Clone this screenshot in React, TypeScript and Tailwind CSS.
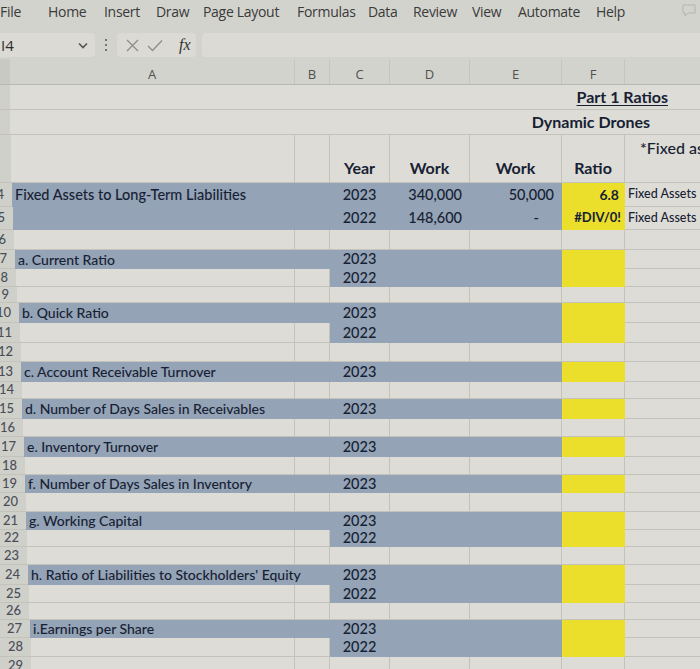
import React from "react";

type Fill = "none" | "blue" | "yellow";

const fillCls: Record<Fill, string> = {
  none: "bg-[#dddcd6] border-[#c3c2bb]",
  blue: "bg-[#94a3b5] border-[#94a3b5]",
  yellow: "bg-[#ebdf2b] border-[#ebdf2b]",
};

function Cell({
  w,
  fill = "none",
  className = "",
  children,
}: {
  w: string;
  fill?: Fill;
  className?: string;
  children?: React.ReactNode;
}) {
  return (
    <div
      className={`${w} ${fillCls[fill]} shrink-0 border-r border-b flex items-center whitespace-nowrap ${className}`}
    >
      {children}
    </div>
  );
}

type Row = {
  n: number;
  h: string;
  hw: string;
  label?: string;
  aBlue?: boolean;
  cBlue?: boolean;
  year?: string;
  yellow?: boolean;
};

const rows: Row[] = [
  { n: 6, h: "h-[20px]", hw: "w-[14px]" },
  { n: 7, h: "h-[19px]", hw: "w-[15px]", label: "a. Current Ratio", aBlue: true, cBlue: true, year: "2023", yellow: true },
  { n: 8, h: "h-[18px]", hw: "w-[16px]", cBlue: true, year: "2022", yellow: true },
  { n: 9, h: "h-[16px]", hw: "w-[17px]" },
  { n: 10, h: "h-[20px]", hw: "w-[19px]", label: "b. Quick Ratio", aBlue: true, cBlue: true, year: "2023", yellow: true },
  { n: 11, h: "h-[20px]", hw: "w-[20px]", cBlue: true, year: "2022", yellow: true },
  { n: 12, h: "h-[19px]", hw: "w-[21px]" },
  { n: 13, h: "h-[20px]", hw: "w-[21px]", label: "c. Account Receivable Turnover", aBlue: true, cBlue: true, year: "2023", yellow: true },
  { n: 14, h: "h-[17px]", hw: "w-[22px]" },
  { n: 15, h: "h-[20px]", hw: "w-[22px]", label: "d. Number of Days Sales in Receivables", aBlue: true, cBlue: true, year: "2023", yellow: true },
  { n: 16, h: "h-[18px]", hw: "w-[23px]" },
  { n: 17, h: "h-[20px]", hw: "w-[24px]", label: "e. Inventory Turnover", aBlue: true, cBlue: true, year: "2023", yellow: true },
  { n: 18, h: "h-[18px]", hw: "w-[25px]" },
  { n: 19, h: "h-[18px]", hw: "w-[25px]", label: "f. Number of Days Sales in Inventory", aBlue: true, cBlue: true, year: "2023", yellow: true },
  { n: 20, h: "h-[19px]", hw: "w-[26px]" },
  { n: 21, h: "h-[18px]", hw: "w-[26px]", label: "g. Working Capital", aBlue: true, cBlue: true, year: "2023", yellow: true },
  { n: 22, h: "h-[17px]", hw: "w-[27px]", cBlue: true, year: "2022", yellow: true },
  { n: 23, h: "h-[18px]", hw: "w-[27px]" },
  { n: 24, h: "h-[20px]", hw: "w-[28px]", label: "h. Ratio of Liabilities to Stockholders' Equity", aBlue: true, cBlue: true, year: "2023", yellow: true },
  { n: 25, h: "h-[18px]", hw: "w-[29px]", cBlue: true, year: "2022", yellow: true },
  { n: 26, h: "h-[17px]", hw: "w-[29px]" },
  { n: 27, h: "h-[18px]", hw: "w-[30px]", label: "i.Earnings per Share", aBlue: true, cBlue: true, year: "2023", yellow: true },
  { n: 28, h: "h-[19px]", hw: "w-[31px]", cBlue: true, year: "2022", yellow: true },
  { n: 29, h: "h-[19px]", hw: "w-[31px]" },
];

const font = "font-['Lato','Liberation_Sans',sans-serif]";

function RowHead({ w, n }: { w: string; n: number | string }) {
  return (
    <div
      className={`${w} shrink-0 h-full bg-[#d0d0cb] border-b border-[#c3c2bb] flex items-center justify-end pr-[8px] overflow-hidden text-[13px] text-[#4a4f57]`}
    >
      {n}
    </div>
  );
}

function Menu() {
  const items: [string, string][] = [
    ["File", "w-[48px]"],
    ["Home", "w-[56px]"],
    ["Insert", "w-[52px]"],
    ["Draw", "w-[47px]"],
    ["Page Layout", "w-[94px]"],
    ["Formulas", "w-[71px]"],
    ["Data", "w-[45px]"],
    ["Review", "w-[59px]"],
    ["View", "w-[46px]"],
    ["Automate", "w-[78px]"],
    ["Help", "w-[60px]"],
  ];
  return (
    <div className="h-[22px] flex items-center text-[14px] text-[#3a3a3a] font-['Open_Sans',sans-serif] tracking-[-0.3px]">
      {items.map(([t, w]) => (
        <div key={t} className={`${w} shrink-0`}>
          {t}
        </div>
      ))}
      <div className="ml-auto mr-[4px] mt-[-2px]">
        <svg width="14" height="13" viewBox="0 0 14 13" fill="none" stroke="#b5b5b0" strokeWidth="1">
          <path d="M1 1h12v8H6l-3 3V9H1z" />
        </svg>
      </div>
    </div>
  );
}

function FormulaBar() {
  return (
    <div className="h-[37px] pt-[11px] pb-[2px] flex items-stretch">
      <div className="w-[95px] h-[24px] shrink-0 bg-[#dbdad5] rounded-r-[4px] flex items-center justify-between pr-[7px] text-[15px] text-[#2e2e2e] font-['Open_Sans',sans-serif]">
        <span className="ml-[1px]">I4</span>
        <svg width="10" height="7" viewBox="0 0 10 7" fill="none" stroke="#555" strokeWidth="1.6">
          <path d="M1 1.5l4 4 4-4" />
        </svg>
      </div>
      <div className="w-[22px] h-[24px] shrink-0 flex flex-col items-center justify-center gap-[3px]">
        <div className="w-[2px] h-[2px] bg-[#555] rounded-full" />
        <div className="w-[2px] h-[2px] bg-[#555] rounded-full" />
        <div className="w-[2px] h-[2px] bg-[#555] rounded-full" />
      </div>
      <div className="w-[79px] h-[24px] shrink-0 bg-[#dbdad5] rounded-[4px] flex items-center pl-[8px] gap-[7px]">
        <svg width="15" height="15" viewBox="0 0 15 15" fill="none" stroke="#8d8d8a" strokeWidth="1.3">
          <path d="M2 2l11 11M13 2L2 13" />
        </svg>
        <svg width="16" height="13" viewBox="0 0 16 13" fill="none" stroke="#8d8d8a" strokeWidth="1.3">
          <path d="M1 7l4.5 4.5L15 1.5" />
        </svg>
        <span className="ml-[9px] text-[16px] italic text-[#333] font-['Liberation_Serif',serif]">fx</span>
      </div>
      <div className="ml-[6px] flex-1 h-[24px] bg-[#dbdad5] rounded-l-[4px]" />
    </div>
  );
}

function ColHeaders() {
  const cols: [string, string][] = [
    ["A", "w-[285px]"],
    ["B", "w-[35px]"],
    ["C", "w-[60px]"],
    ["D", "w-[80px]"],
    ["E", "w-[92px]"],
    ["F", "w-[63px]"],
  ];
  return (
    <div className="h-[26px] flex border-b border-[#b8b8b2] text-[13px] text-[#505050] font-['Open_Sans',sans-serif]">
      <div className="w-[10px] shrink-0 bg-[#c9c9c4]" />
      {cols.map(([c, w]) => (
        <div key={c} className={`${w} shrink-0 flex items-center justify-center border-r border-[#c6c6c0] pt-[6px]`}>
          {c}
        </div>
      ))}
      <div className="flex-1" />
    </div>
  );
}

export default function App() {
  return (
    <div className={`w-[700px] h-[669px] overflow-hidden bg-[#d3d3ce] ${font}`}>
      <Menu />
      <FormulaBar />
      <ColHeaders />

      <div className="text-[#172134] font-medium">
        {/* Row 1 */}
        <div className="h-[25px] flex">
          <RowHead w="w-[10px]" n="" />
          <div className="flex-1 bg-[#dddcd6] border-b border-[#c3c2bb] flex items-center justify-end pr-[32px]">
            <span className="text-[16px] font-bold underline underline-offset-[2px]">Part 1 Ratios</span>
          </div>
        </div>
        {/* Row 2 */}
        <div className="h-[25px] flex">
          <RowHead w="w-[10px]" n="" />
          <div className="flex-1 bg-[#dddcd6] border-b border-[#c3c2bb] flex items-center justify-end pr-[50px]">
            <span className="text-[16px] font-bold">Dynamic Drones</span>
          </div>
        </div>
        {/* Row 3 */}
        <div className="h-[48px] flex">
          <div className="w-[295px] shrink-0 flex h-full">
            <RowHead w="w-[11px]" n="" />
            <Cell w="flex-1" className="h-full" />
          </div>
          <Cell w="w-[35px]" className="h-full" />
          <Cell w="w-[60px]" className="h-full items-end justify-center pb-[2px] text-[16px] font-bold">Year</Cell>
          <Cell w="w-[80px]" className="h-full items-end justify-center pb-[2px] text-[16px] font-bold">Work</Cell>
          <Cell w="w-[92px]" className="h-full items-end justify-center pb-[2px] text-[16px] font-bold">Work</Cell>
          <Cell w="w-[63px]" className="h-full items-end justify-center pb-[2px] text-[16px] font-bold">Ratio</Cell>
          <div className="flex-1 h-full bg-[#dddcd6] border-b border-[#c3c2bb] overflow-hidden whitespace-nowrap pl-[15px] pt-[1px] text-[16px]">
            *Fixed assets
          </div>
        </div>
        {/* Row 4 */}
        <div className="h-[24px] flex">
          <div className="w-[295px] shrink-0 flex h-full">
            <RowHead w="w-[12px]" n={4} />
            <Cell w="flex-1" fill="blue" className="h-full pl-[3px] text-[14.5px]">Fixed Assets to Long-Term Liabilities</Cell>
          </div>
          <Cell w="w-[35px]" fill="blue" className="h-full" />
          <Cell w="w-[60px]" fill="blue" className="h-full justify-center text-[14.5px]">2023</Cell>
          <Cell w="w-[80px]" fill="blue" className="h-full justify-end pr-[7px] text-[14.5px]">340,000</Cell>
          <Cell w="w-[92px]" fill="blue" className="h-full justify-end pr-[7px] text-[14.5px]">50,000</Cell>
          <Cell w="w-[63px]" fill="yellow" className="h-full justify-end pr-[5px] text-[14px] font-bold">6.8</Cell>
          <div className="flex-1 h-full bg-[#dddcd6] border-b border-[#c3c2bb] flex items-center overflow-hidden whitespace-nowrap pl-[3px] text-[12.5px]">
            Fixed Assets
          </div>
        </div>
        {/* Row 5 */}
        <div className="h-[23px] flex">
          <div className="w-[295px] shrink-0 flex h-full">
            <RowHead w="w-[13px]" n={5} />
            <Cell w="flex-1" fill="blue" className="h-full" />
          </div>
          <Cell w="w-[35px]" fill="blue" className="h-full" />
          <Cell w="w-[60px]" fill="blue" className="h-full justify-center text-[14.5px]">2022</Cell>
          <Cell w="w-[80px]" fill="blue" className="h-full justify-end pr-[7px] text-[14.5px]">148,600</Cell>
          <Cell w="w-[92px]" fill="blue" className="h-full justify-end pr-[22px] text-[14.5px]">-</Cell>
          <Cell w="w-[63px]" fill="yellow" className="h-full justify-end pr-[3px] text-[13px] font-bold">#DIV/0!</Cell>
          <div className="flex-1 h-full bg-[#dddcd6] border-b border-[#c3c2bb] flex items-center overflow-hidden whitespace-nowrap pl-[3px] text-[12.5px]">
            Fixed Assets
          </div>
        </div>

        {rows.map((r) => {
          const aFill: Fill = r.aBlue ? "blue" : "none";
          const cFill: Fill = r.cBlue ? "blue" : "none";
          const fFill: Fill = r.yellow ? "yellow" : "none";
          return (
            <div key={r.n} className={`${r.h} flex`}>
              <div className="w-[295px] shrink-0 flex h-full">
                <RowHead w={r.hw} n={r.n} />
                <Cell w="flex-1 min-w-0" fill={aFill} className="h-full pl-[3px] text-[14px] relative z-[1]">
                  {r.label}
                </Cell>
              </div>
              <Cell w="w-[35px]" fill={aFill} className="h-full" />
              <Cell w="w-[60px]" fill={cFill} className="h-full justify-center text-[14.5px]">
                {r.year}
              </Cell>
              <Cell w="w-[80px]" fill={cFill} className="h-full" />
              <Cell w="w-[92px]" fill={cFill} className="h-full" />
              <Cell w="w-[63px]" fill={fFill} className="h-full" />
              <Cell w="flex-1" className="h-full border-r-0" />
            </div>
          );
        })}
      </div>
    </div>
  );
}
